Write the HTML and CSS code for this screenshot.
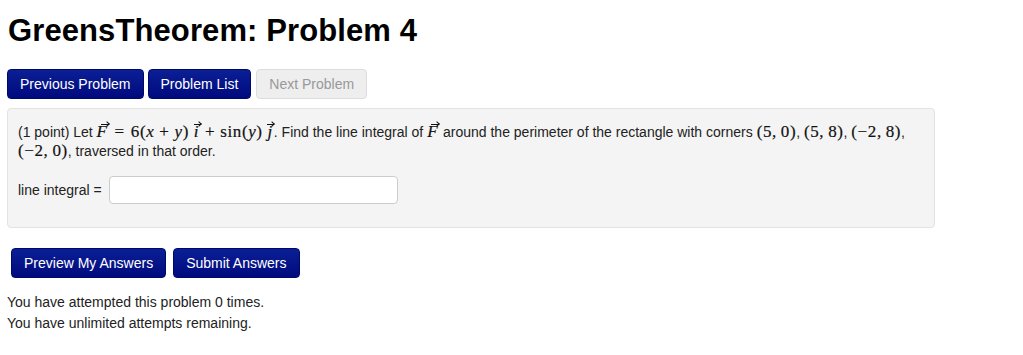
FILE: index.html
```html
<!DOCTYPE html>
<html lang="en">
<head>
    <meta charset="UTF-8">
    <title>GreensTheorem: Problem 4</title>
    <link rel="stylesheet" href="styles.css">
</head>
<body>
    <h1>GreensTheorem: Problem 4</h1>

    <!-- Problem navigation -->
    <div class="nav-buttons">
        <button class="btn">Previous Problem</button>
        <button class="btn">Problem List</button>
        <button class="btn disabled">Next Problem</button>
    </div>

    <!-- Problem body -->
    <div class="problem">
        <p class="problem-text">
            (1 point) Let <span class="math"><span class="vec">F</span><span class="op">=</span>6(<i>x</i><span class="op plus">+</span><i>y</i>)&nbsp;<span class="vec small">i</span><span class="op plus">+</span>sin(<i>y</i>)&nbsp;<span class="vec small">j</span></span>. Find the line integral of <span class="math"><span class="vec">F</span></span> around the perimeter of the rectangle with corners <span class="math">(5,&thinsp;0)</span>, <span class="math">(5,&thinsp;8)</span>, <span class="math">(&minus;2,&thinsp;8)</span>, <span class="math">(&minus;2,&thinsp;0)</span>, traversed in that order.
        </p>
        <div class="answer-row">
            <label for="ans">line integral =</label>
            <input type="text" id="ans">
        </div>
    </div>

    <!-- Submit -->
    <div class="submit-buttons">
        <button class="btn">Preview My Answers</button>
        <button class="btn">Submit Answers</button>
    </div>

    <p class="attempts">
        You have attempted this problem 0 times.<br>
        You have unlimited attempts remaining.
    </p>
</body>
</html>
```

FILE: styles.css
```css
body {
    font-family: "Liberation Sans", Arial, sans-serif;
    font-size: 14px;
    color: #222;
    margin: 0;
    padding: 0 7px;
}
h1 {
    font-size: 31px;
    font-weight: bold;
    color: #000;
    margin: 12px 0 0 1px;
    line-height: 38px;
    letter-spacing: 0.1px;
}
.nav-buttons {
    display: flex;
    gap: 4px;
    margin-top: 19px;
}
.btn {
    font-family: "Liberation Sans", Arial, sans-serif;
    font-size: 14px;
    height: 30px;
    padding: 0 12px;
    color: #fff;
    background: linear-gradient(#0b1f95, #000a7e);
    border: 1px solid #00086a;
    border-radius: 4px;
    cursor: pointer;
}
.btn.disabled {
    color: #999;
    background: #eee;
    border: 1px solid #ddd;
    margin-left: 1px;
}
.problem {
    margin-top: 9px;
    width: 906px;
    padding: 14px 10px 23px 10px;
    background-color: #f4f4f4;
    border: 1px solid #e3e3e3;
    border-radius: 4px;
}
.problem-text {
    margin: 0;
    font-size: 14px;
    line-height: 19px;
}
.math {
    font-family: "Liberation Serif", "Times New Roman", serif;
    font-size: 17px;
    line-height: 14px;
    letter-spacing: 0.6px;
    color: #111;
    white-space: nowrap;
    -webkit-text-stroke: 0.2px #111;
}
.math i,
.vec {
    font-style: italic;
}
.op {
    margin: 0 6px;
}
.op.plus {
    margin: 0 5px;
}
.vec {
    position: relative;
    display: inline-block;
    padding-right: 1px;
}
/* vector arrow: shaft + head */
.vec::before {
    content: "";
    position: absolute;
    left: 4px;
    top: -1px;
    width: 8px;
    height: 1px;
    background: #111;
}
.vec::after {
    content: "";
    position: absolute;
    left: 8px;
    top: -3px;
    width: 3px;
    height: 3px;
    border-top: 1px solid #111;
    border-right: 1px solid #111;
    transform: rotate(45deg);
}
.vec.small::before {
    left: 0;
    width: 7px;
}
.vec.small::after {
    left: 3px;
}
.answer-row {
    display: flex;
    align-items: center;
    gap: 7px;
    margin-top: 15px;
}
.answer-row input {
    height: 28px;
    padding: 0 4px;
    border: 1px solid #ccc;
    border-radius: 4px;
    background: #fff;
    box-sizing: border-box;
    width: 289px;
}
.submit-buttons {
    display: flex;
    gap: 7px;
    margin: 20px 0 0 4px;
}
.attempts {
    margin: 14px 0 0 0;
    font-size: 14px;
    line-height: 21px;
}
```
